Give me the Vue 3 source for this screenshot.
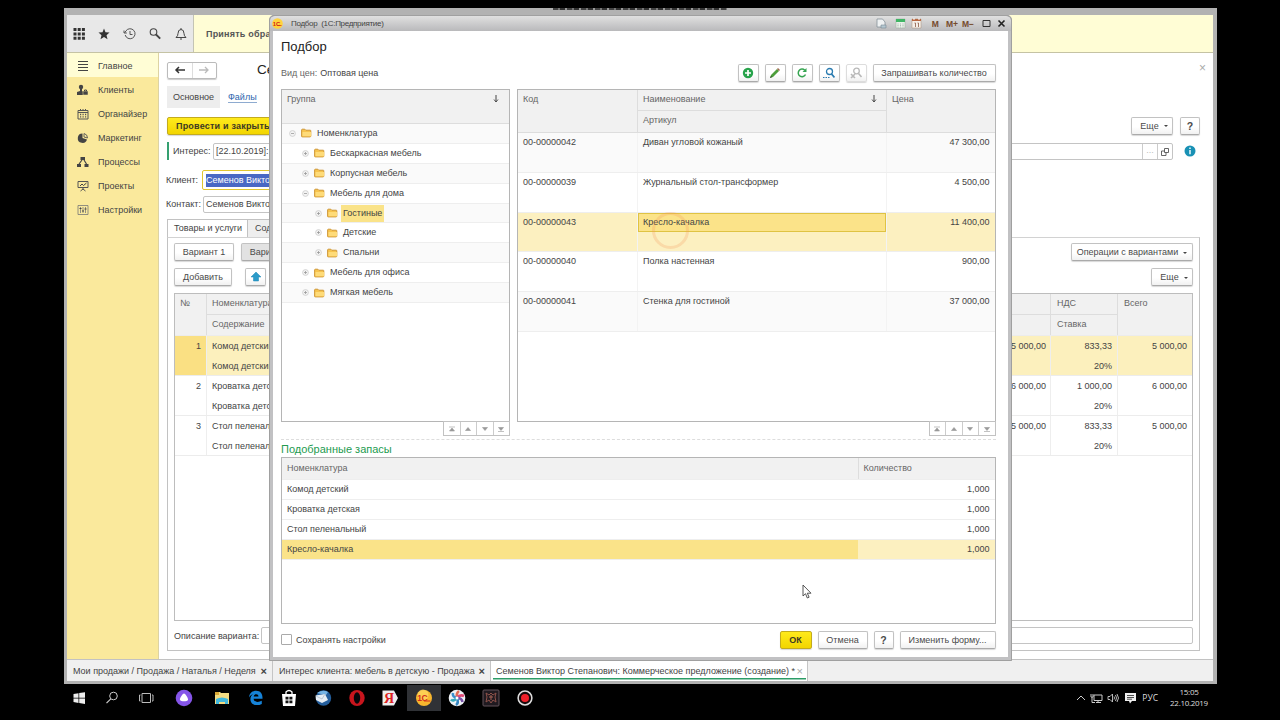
<script setup>
import { ref } from "vue";

const menu = ref([
  { name: "Главное", icon: "lines" },
  { name: "Клиенты", icon: "clients" },
  { name: "Органайзер", icon: "calendar" },
  { name: "Маркетинг", icon: "pie" },
  { name: "Процессы", icon: "process" },
  { name: "Проекты", icon: "board" },
  { name: "Настройки", icon: "settings" }
]);
const activeMenu = ref("Главное");

const offerRows = ref([
  { n: 1, name: "Комод детский", sum: "5 000,00", vat: "833,33", total: "5 000,00" },
  { n: 2, name: "Кроватка детская", sum: "6 000,00", vat: "1 000,00", total: "6 000,00" },
  { n: 3, name: "Стол пеленальный", sum: "5 000,00", vat: "833,33", total: "5 000,00" }
]);

const groups = ref([
  { name: "Номенклатура", level: 0, open: true },
  { name: "Бескаркасная мебель", level: 1 },
  { name: "Корпусная мебель", level: 1 },
  { name: "Мебель для дома", level: 1, open: true },
  { name: "Гостиные", level: 2 },
  { name: "Детские", level: 2 },
  { name: "Спальни", level: 2 },
  { name: "Мебель для офиса", level: 1 },
  { name: "Мягкая мебель", level: 1 }
]);
const activeGroup = ref("Гостиные");

const goods = ref([
  { code: "00-00000042", name: "Диван угловой кожаный", price: "47 300,00" },
  { code: "00-00000039", name: "Журнальный стол-трансформер", price: "4 500,00" },
  { code: "00-00000043", name: "Кресло-качалка", price: "11 400,00" },
  { code: "00-00000040", name: "Полка настенная", price: "900,00" },
  { code: "00-00000041", name: "Стенка для гостиной", price: "37 000,00" }
]);
const activeGood = ref("00-00000043");

const picked = ref(["Комод детский", "Кроватка детская", "Стол пеленальный", "Кресло-качалка"]);
const activePicked = ref("Кресло-качалка");

const pager = ["M1 2h6M4 3L6.500 6h-5z", "M4 2.500L6.500 5.500h-5z", "M4 5.500L6.500 2.500h-5z", "M1 6.500h6M4 5.500L6.500 2.500h-5z"];

/* MENU ICONS, 12x12 */
const menuIcons = {
  lines: '<path d="M1 1.500h10M1 4.500h10M1 7.500h10M1 10.500h10" stroke="#444" stroke-width="1.200"/>',
  clients: '<circle cx="4" cy="3" r="2.200" fill="#444"/><path d="M3 5h2v2l2 1v3H0V8l3-1z" fill="#444"/><path d="M6 7h5v4H6z" fill="#444" stroke="#fae89a" stroke-width=".5"/><path d="M7.500 7V6h2v1" fill="none" stroke="#444"/>',
  calendar: '<path d="M1 2.500h10v8.500H1zM1 4.500h10M3.500 1v2M6 1v2M8.500 1v2" fill="none" stroke="#555"/><path d="M3 6.500h1.200M5.500 6.500h1.200M8 6.500h1.200M3 8.800h1.200M5.500 8.800h1.200M8 8.800h1.200" stroke="#555" stroke-width="1.300"/>',
  pie: '<path d="M5.500 1.500A4.700 4.700 0 1 0 10 7.500L5.500 6z" fill="#444"/><path d="M7 1.500A4.500 4.500 0 0 1 10.500 6L7 5z" fill="none" stroke="#555" stroke-width=".9"/>',
  process: '<path d="M3.500 1h4.500v3H3.500zM0 8h4v3H0zM7.500 8h4v3h-4z" fill="#444"/><path d="M5 4L2 8M7 4l2.500 4" stroke="#444" stroke-width="1.200"/>',
  board: '<path d="M1 1.500h10v6H1zM6 7.500v2M3.500 11L6 9l2.500 2" fill="none" stroke="#555"/><path d="M3 6l2-2 1.500 1.500L9.500 3" fill="none" stroke="#444"/>',
  settings: '<path d="M1 1.500h10v9H1z" fill="none" stroke="#777" stroke-width=".8"/><path d="M3.500 3v6M6 3v6M8.500 3v6" stroke="#777" stroke-width=".8"/><path d="M2.500 4.500h2M5 7h2M7.500 5h2" stroke="#444" stroke-width="1.200"/>'
};

/* TASKBAR ICONS, 18x18 */
const apps = [
  { id: "win", svg: '<path d="M3.500 5l5-.8v4.500h-5zM9.200 4.100L15 3.300v5.400H9.200zM3.500 9.400h5v4.500l-5-.8zM9.200 9.400H15v5.500l-5.800-.9z" fill="#eee"/>' },
  { id: "search", svg: '<circle cx="10.500" cy="7" r="3.800" fill="none" stroke="#ccc"/><path d="M7.800 9.800L3.500 14.200" stroke="#ccc" stroke-width="1.200"/>' },
  { id: "tasks", svg: '<path d="M5 4.500h8.500v9H5zM3.500 6h-1v6h1M15 6h1v6h-1" fill="none" stroke="#bbb"/>' },
  { id: "alice", svg: '<circle cx="9" cy="9" r="8.300" fill="#8555e8"/><path d="M9 4.500c1.500 0 4.500 5 4 6.500-.6 1.800-7.400 1.800-8 0C4.500 9.500 7.500 4.500 9 4.500z" fill="#fff"/>' },
  { id: "explorer", svg: '<path d="M2 3h5l1 1h8v11H2z" fill="#f3dc83"/><path d="M2 3h4v3H2z" fill="#d9a936"/><path d="M3 10q6-3 12 0v5h-3v-2H6v2H3z" fill="#42b8dd"/>' },
  { id: "edge", svg: '<path d="M2 8.500C2.500 3.500 6 1.800 9.200 1.800c4.300 0 6.500 3 6.300 7.900H6.600c.3 3.600 4.700 4 8.200 2.100v3.100C9.600 17.500 3.300 15.700 3.400 10c0-2.200 1.200-4.100 3.100-5C4.600 5.300 3 6.700 2 8.500zM6.700 7.400h4.800C11.500 4.400 7 4.500 6.700 7.400z" fill="#1683d8"/>' },
  { id: "store", svg: '<path d="M2 5h14l-1 12H3z" fill="#fff"/><path d="M6 5V3q3-3 6 0v2" fill="none" stroke="#fff" stroke-width="1.300"/><path d="M5.500 7.800h3v2.800h-3zM9.400 7.800h3v2.800h-3zM5.500 11.400h3v2.800h-3zM9.400 11.400h3v2.800h-3z" fill="#111"/>' },
  { id: "mail", svg: '<circle cx="9.500" cy="9" r="7.700" fill="#245e9c"/><path d="M3 4q6-4 11-1l-2 3z" fill="#75b3e3"/><path d="M1.500 6.500L11 5l3 6-6 3-6-3z" fill="#e7eef4"/><path d="M2 7l6 3 3-5" fill="none" stroke="#a9b8c5" stroke-width=".7"/>' },
  { id: "opera", svg: '<ellipse cx="9" cy="9" rx="7.700" ry="8" fill="#c8151d"/><ellipse cx="9" cy="9" rx="3.200" ry="5.700" fill="#06070b"/>' },
  { id: "yandex", svg: '<path d="M1.500 1.500H13L17 9l-4 7.500H1.500z" fill="#eee"/><text x="3" y="14" fill="#d22" font-family="Liberation Serif" font-weight="bold" font-size="14">Я</text>' },
  { id: "onec", svg: '<circle cx="9" cy="9" r="8" fill="#f8b72e"/><circle cx="8" cy="6" r="5.500" fill="#fed45c" opacity=".8"/><text x="2.200" y="12" fill="#d3301c" font-family="Liberation Sans" font-weight="bold" font-size="8.500" letter-spacing="-.5">1С</text><path d="M9 12h6.500" stroke="#d3301c"/>' },
  { id: "wheel", svg: '<circle cx="9" cy="9" r="8.300" fill="#eef2f5"/><g fill="none" stroke-width="2.600"><path d="M9 9Q8 4 11 2" stroke="#e26b54"/><path d="M9 9Q12 5 16 7" stroke="#e34b78"/><path d="M9 9Q14 9 14.500 13" stroke="#7953a8"/><path d="M9 9Q11 14 8 16" stroke="#3485c1"/><path d="M9 9Q5 13 3 10.500" stroke="#37a9bb"/><path d="M9 9Q4 8 5 4" stroke="#398fca"/></g><circle cx="9" cy="9" r="1.500" fill="#fff"/>' },
  { id: "game", svg: '<rect x="1" y="1" width="16" height="16" rx="1" fill="#201a20" stroke="#62535a"/><path d="M4 4l3 2 2-2 2 2 3-2-1 4 1 5-3-2-2 3-2-3-3 2 1-5z" fill="none" stroke="#8e5149"/><path d="M7 8h4M9 6v5" stroke="#a46356"/>' },
  { id: "record", svg: '<circle cx="9" cy="9" r="6.900" fill="#16090b" stroke="#ddd" stroke-width="1.500"/><circle cx="9" cy="9" r="4" fill="#f0202a"/>' }
];
</script>

<template>
  <div class="screen">
    <div class="window">
      <div class="behind"></div>
      <header class="top">
        <div class="tools">
          <svg width="14" height="14" viewBox="0 0 14 14"><path d="M3 1v12M7.200 1v12M11.400 1v12" stroke="#333" stroke-width="3" stroke-dasharray="3 1.400" /></svg>
          <svg width="14" height="14" viewBox="0 0 14 14"><path d="M7 1.500l1.500 3.800 4 .3-3 2.700 1 4L7 10.100l-3.500 2.200 1-4-3-2.700 4-.3z" fill="#333" /></svg>
          <svg width="14" height="14" viewBox="0 0 14 14"><path d="M2.200 8A5 5 0 1 0 3 3.800L1.500 6M1 3.500V6h2.800M7 4v3.500h2.500" fill="none" stroke="#555" /></svg>
          <svg width="14" height="14" viewBox="0 0 14 14"><circle cx="5.500" cy="5" r="3.300" fill="none" stroke="#444" stroke-width="1.100" /><path d="M8 7.500l4.200 4.200" stroke="#444" stroke-width="1.900" /></svg>
          <svg width="14" height="14" viewBox="0 0 14 14"><path d="M2 10.500q2-1.500 2-4Q4 2.500 7 2.500t3 4q0 2.500 2 4zM6 12h2M7 1v1.500" fill="none" stroke="#444" /></svg>
        </div>
        <div class="notice">Принять обращение</div>
      </header>

      <div class="body">
        <nav class="menu">
          <div v-for="item in menu" :key="item.name" class="menu-item" :class="{ active: item.name === activeMenu }" @click="activeMenu = item.name">
            <svg width="12" height="12" viewBox="0 0 12 12" v-html="menuIcons[item.icon]"></svg>
            <span>{{ item.name }}</span>
          </div>
        </nav>

        <main class="form">
          <div class="line title-line">
            <div class="arrows">
              <span><svg width="12" height="8" viewBox="0 0 12 8"><path d="M11 4H2M5 1L2 4l3 3" fill="none" stroke="#333" stroke-width="1.500" /></svg></span>
              <span><svg width="12" height="8" viewBox="0 0 12 8"><path d="M1 4h9M7 1l3 3-3 3" fill="none" stroke="#bbb" stroke-width="1.300" /></svg></span>
            </div>
            <h1>Семенов Виктор</h1>
            <span class="form-close">×</span>
          </div>
          <div class="line links"><span class="current">Основное</span><a>Файлы</a></div>
          <div class="line commands">
            <button class="btn yellow">Провести и закрыть</button>
            <span class="grow"></span>
            <button class="btn more">Еще<i></i></button>
            <button class="btn help">?</button>
          </div>
          <div class="line interest">
            <label>Интерес:</label>
            <div class="input"><span>[22.10.2019]:</span><em>...</em><em class="open"><svg width="8" height="8" viewBox="0 0 8 8"><path d="M3.500 .5h4v4h-4zM3.500 3h-3v4.500H5v-3" fill="none" stroke="#555" stroke-width=".9" /></svg></em></div>
            <svg class="info" width="12" height="12" viewBox="0 0 12 12"><circle cx="6" cy="6" r="5.500" fill="#1991b5" /><path d="M6 2.500v1.500M6 5v4.300" stroke="#fff" stroke-width="1.400" /></svg>
          </div>
          <div class="line client"><label>Клиент:</label><div class="input focus"><mark>Семенов Виктор Степанович</mark></div></div>
          <div class="line contact"><label>Контакт:</label><div class="input">Семенов Виктор</div></div>
          <div class="page-tabs"><span class="on">Товары и услуги</span><span>Содержание</span></div>
          <section class="page">
            <div class="line variants">
              <button class="btn">Вариант 1</button>
              <button class="btn pressed">Вариант 2</button>
              <span class="grow"></span>
              <button class="btn ops">Операции с вариантами<i></i></button>
            </div>
            <div class="line adding">
              <button class="btn">Добавить</button>
              <button class="btn up"><svg width="12" height="12" viewBox="0 0 12 12"><path d="M6 1l5 5H8.500v4h-5V6H1z" fill="#2c9bc9" stroke="#1984b5" stroke-width=".5" /></svg></button>
              <span class="grow"></span>
              <button class="btn more">Еще<i></i></button>
            </div>
            <div class="offer">
              <div class="offer-row head">
                <div class="num">№</div>
                <div class="name"><p>Номенклатура</p><p>Содержание</p></div>
                <div class="vat"><p>НДС</p><p>Ставка</p></div>
                <div class="total"><p>Всего</p></div>
              </div>
              <div v-for="row in offerRows" :key="row.n" class="offer-row" :class="{ selected: row.n === 1 }">
                <div class="num">{{ row.n }}</div>
                <div class="name"><p>{{ row.name }}<span>{{ row.sum }}</span></p><p>{{ row.name }}</p></div>
                <div class="vat"><p>{{ row.vat }}</p><p>20%</p></div>
                <div class="total"><p>{{ row.total }}</p></div>
              </div>
            </div>
            <div class="line description"><label>Описание варианта:</label><div class="input"></div></div>
          </section>
        </main>
      </div>

      <footer class="windows">
        <div class="win-tab first">Мои продажи / Продажа / Наталья / Неделя<b>×</b></div>
        <div class="win-tab second">Интерес клиента: мебель в детскую - Продажа<b>×</b></div>
        <div class="win-tab active">Семенов Виктор Степанович: Коммерческое предложение (создание) *<b>×</b></div>
      </footer>
    </div>

    <!-- TASKBAR -->
    <div class="taskbar">
      <div v-for="app in apps" :key="app.id" class="app" :class="app.id"><svg width="18" height="18" viewBox="0 0 18 18" v-html="app.svg"></svg></div>
      <span class="grow"></span>
      <div class="tray">
        <svg width="10" height="10" viewBox="0 0 10 10"><path d="M1 7l4-4 4 4" fill="none" stroke="#ccc" /></svg>
        <svg width="13" height="12" viewBox="0 0 13 12"><path d="M4 3h8v5.500H4zM6 10.500h5M8 8.500v2M1 2v3q1 1 2 0V2M2 6v4.500h3" fill="none" stroke="#ccc" /></svg>
        <svg width="12" height="12" viewBox="0 0 12 12"><path d="M1 4.500h2L5.500 2v8L3 7.500H1zM7 4.500q1 1.500 0 3M8.500 3q2 3 0 6M10 2q3 4 0 8" fill="none" stroke="#ccc" stroke-width=".9" /></svg>
        <svg class="msg" width="13" height="12" viewBox="0 0 13 12"><path d="M1 1h11v8H8l-2 2.500L5 9H1z" fill="#eee" /><path d="M3 3.500h7M3 5.500h7M3 7.200h5" stroke="#222" stroke-width=".8" /></svg>
        <span class="lang">РУС</span>
        <span class="clock">15:05<br />22.10.2019</span>
      </div>
    </div>

    <!-- PICK DIALOG -->
    <div class="dialog">
      <div class="dialog-bar">
        <svg width="11" height="11" viewBox="0 0 11 11"><circle cx="5.500" cy="5.500" r="5.300" fill="#ffd33d" /><text x=".8" y="7.500" font-size="5.800" font-weight="bold" font-family="Liberation Sans" fill="#d02317">1С</text><path d="M5.500 7.500h4" stroke="#d02317" stroke-width=".7" /></svg>
        <span class="bar-title">Подбор&nbsp; (1С:Предприятие)</span>
        <span class="grow"></span>
        <div class="bar-tools">
          <svg class="doc" width="11" height="11" viewBox="0 0 11 11"><path d="M1 1h5.500L9 4v5H1z" fill="#eef1f2" stroke="#87929a" stroke-width=".8" /><path d="M5 7h5v3H5z" fill="#b4c7d0" stroke="#7b8b93" stroke-width=".6" /></svg>
          <svg class="calc" width="11" height="11" viewBox="0 0 11 11"><path d="M1 1h9v9H1z" fill="#e9f1e9" stroke="#9a9" stroke-width=".5" /><path d="M1 1h9v3H1z" fill="#40b565" /><path d="M3 5.500v4M5.500 5.500v4M8 5.500v4" stroke="#a9b6b1" stroke-dasharray="1 .6" /></svg>
          <svg class="cal" width="11" height="11" viewBox="0 0 11 11"><path d="M1 1h9v9H1z" fill="#f5f0e9" stroke="#aa8f76" stroke-width=".5" /><path d="M1 1h9v2H1z" fill="#b76843" /><path d="M3 0v2M8 0v2" stroke="#fff" /><path d="M3.500 5h1v4M6.500 5h1v4" fill="none" stroke="#8c5944" stroke-width=".8" /></svg>
          <b class="m1">M</b><b class="m2">M+</b><b class="m3">M−</b>
          <svg class="max" width="9" height="9" viewBox="0 0 9 9"><path d="M1 1.500h7v6H1z" fill="none" stroke="#333" /></svg>
          <svg width="9" height="9" viewBox="0 0 9 9"><path d="M1.500 1.500l6 6M7.500 1.500l-6 6" stroke="#222" stroke-width="1.600" /></svg>
        </div>
      </div>

      <div class="dialog-body">
        <h2>Подбор</h2>
        <div class="pick-line">
          <label>Вид цен:</label><span>Оптовая цена</span>
          <span class="grow"></span>
          <button class="btn sq"><svg width="12" height="12" viewBox="0 0 12 12"><circle cx="6" cy="6" r="5.200" fill="#27a34b" /><path d="M6 3v6M3 6h6" stroke="#fff" stroke-width="1.700" /></svg></button>
          <button class="btn sq"><svg width="12" height="12" viewBox="0 0 12 12"><path d="M1 11l1-3 6-6 2 2-6 6z" fill="#4d9e3b" /><path d="M8 2l1-1 2 2-1 1z" fill="#a0684f" /><path d="M1 11l1-2 1 1z" fill="#333" /></svg></button>
          <button class="btn sq"><svg width="12" height="12" viewBox="0 0 12 12"><path d="M9.500 7.500A3.800 3.800 0 1 1 8.800 3.300" fill="none" stroke="#35a450" stroke-width="1.500" /><path d="M10.500 1v4h-4z" fill="#35a450" /></svg></button>
          <button class="btn sq"><svg width="12" height="12" viewBox="0 0 12 12"><circle cx="6.500" cy="4.500" r="3" fill="none" stroke="#2a7bb0" stroke-width="1.300" /><path d="M8.500 7l3 3.500" stroke="#2a7bb0" stroke-width="1.800" /><path d="M0 10.500h7" stroke="#2a7bb0" stroke-dasharray="1.500 1" /></svg></button>
          <button class="btn sq off"><svg width="12" height="12" viewBox="0 0 12 12"><circle cx="6.500" cy="4" r="2.800" fill="none" stroke="#b9b9b9" stroke-width="1.300" /><path d="M8.500 6.500l3 3.500M1 7l4 4M5 7l-4 4" stroke="#b9b9b9" stroke-width="1.600" /></svg></button>
          <button class="btn ask">Запрашивать количество</button>
        </div>

        <div class="panes">
          <div class="pane left">
            <div class="grid tree">
              <div class="tree-head">Группа<span class="sort"><svg width="6" height="8" viewBox="0 0 6 8"><path d="M3 0v7" stroke="#444" /><path d="M1 4.500L3 7l2-2.500" fill="none" stroke="#444" stroke-width=".9" /></svg></span></div>
              <div v-for="g in groups" :key="g.name" class="tree-row" :class="'l' + g.level" @click="activeGroup = g.name">
                <svg class="knob" width="7" height="7" viewBox="0 0 7 7"><circle cx="3.500" cy="3.500" r="2.900" fill="#f4f4f4" stroke="#ccc" stroke-width=".8" /><path :d="g.open ? 'M2 3.500h3' : 'M2 3.500h3M3.500 2v3'" stroke="#999" stroke-width=".8" /></svg>
                <svg class="folder" width="11" height="10" viewBox="0 0 11 10"><path d="M.6 8.500V2q0-.8.8-.8h2.400l1 1h4.400q.6 0 .6.6V8q0 .9-.8.9H1.400q-.8 0-.8-.4z" fill="#f7c44e" stroke="#c98f2c" stroke-width=".9" /><path d="M1.500 4h8.700v4.300H1.500z" fill="#fedb79" /></svg>
                <span :class="{ chosen: g.name === activeGroup }">{{ g.name }}</span>
              </div>
            </div>
            <div class="pager"><span v-for="p in pager" :key="p"><svg width="8" height="8" viewBox="0 0 8 8"><path :d="p" fill="#999" stroke="#999" stroke-width=".6" /></svg></span></div>
          </div>
          <div class="pane right">
            <div class="grid goods">
              <div class="goods-row head">
                <div class="code">Код</div>
                <div class="name"><p>Наименование<span class="sort"><svg width="6" height="8" viewBox="0 0 6 8"><path d="M3 0v7" stroke="#444" /><path d="M1 4.500L3 7l2-2.500" fill="none" stroke="#444" stroke-width=".9" /></svg></span></p><p>Артикул</p></div>
                <div class="price">Цена</div>
              </div>
              <div v-for="item in goods" :key="item.code" class="goods-row" :class="{ selected: item.code === activeGood }" @click="activeGood = item.code">
                <div class="code">{{ item.code }}</div>
                <div class="name"><p>{{ item.name }}</p></div>
                <div class="price">{{ item.price }}</div>
              </div>
            </div>
            <div class="pager"><span v-for="p in pager" :key="p"><svg width="8" height="8" viewBox="0 0 8 8"><path :d="p" fill="#999" stroke="#999" stroke-width=".6" /></svg></span></div>
          </div>
        </div>

        <h3>Подобранные запасы</h3>
        <div class="grid picked">
          <div class="picked-row head"><span>Номенклатура</span><span class="qty">Количество</span></div>
          <div v-for="name in picked" :key="name" class="picked-row" :class="{ selected: name === activePicked }" @click="activePicked = name">
            <span>{{ name }}</span><span class="qty">1,000</span>
          </div>
        </div>

        <div class="dialog-foot">
          <i class="check"></i><label>Сохранять настройки</label>
          <span class="grow"></span>
          <button class="btn yellow ok">ОК</button>
          <button class="btn cancel">Отмена</button>
          <button class="btn help">?</button>
          <button class="btn change">Изменить форму...</button>
        </div>
      </div>
    </div>

    <div class="click-mark"></div>
    <svg class="cursor" width="10" height="15" viewBox="0 0 10 15"><path d="M1 1v11l2.500-2.300L5.300 14l1.800-.8-1.800-4H9z" fill="#fff" stroke="#444" stroke-width=".9" /></svg>
  </div>
</template>

<style>
body {
  margin: 0;
  background: #000;
  overflow: hidden;
}
</style>

<style scoped>
* {
  box-sizing: border-box;
}

.screen {
  position: relative;
  width: 1280px;
  height: 720px;
  padding: 8px 63px 0 64px;
  background: #000;
  color: #444;
  font: 9px/12px "Liberation Sans", Arial, sans-serif;
  overflow: hidden;
  white-space: nowrap;
}

h1, h2, h3, p {
  margin: 0;
  font-weight: normal;
}

svg {
  flex: none;
  display: block;
}

.grow {
  flex: 1;
}

.line {
  display: flex;
  align-items: center;
}

/* MAIN WINDOW */
.window {
  height: 676px;
  border: solid #b2b2b2;
  border-width: 0 4px 3px 3px;
  background: #fff;
  display: flex;
  flex-direction: column;
}

.behind {
  height: 7px;
  background: #b2b2b2;
}

.behind::before {
  content: "";
  display: block;
  width: 174px;
  height: 2px;
  margin-left: 486px;
  background: repeating-linear-gradient(90deg, #444 0 5px, #777 5px 7px, #333 7px 12px, #999 12px 14px);
}

.top {
  height: 38px;
  display: flex;
  border-bottom: 1px solid #c5c3a4;
}

.tools {
  width: 127px;
  padding-left: 5px;
  display: flex;
  align-items: center;
  gap: 11.400px;
  background: #e8e8e8;
  border-right: 1px solid #c4c4b4;
}

.notice {
  flex: 1;
  padding: 13px 0 0 12px;
  background: #fffdd5;
  font-weight: bold;
  color: #555;
  letter-spacing: .2px;
}

.body {
  height: 606px;
  display: flex;
}

.menu {
  width: 92px;
  background: #fae99c;
  border-right: 1px solid #ddd3a3;
}

.menu-item {
  height: 24px;
  padding: 1px 0 0 10px;
  display: flex;
  align-items: center;
  gap: 9px;
}

.menu-item.active {
  background: #fffdd5;
}

.form {
  flex: 1;
  padding: 8px 13px 0 8px;
}

.title-line {
  height: 18px;
}

.arrows {
  width: 50px;
  height: 17px;
  display: flex;
  border: 1px solid #bbb;
  border-radius: 2px;
  box-shadow: 0 1px 1px #ccc;
}

.arrows span {
  flex: 1;
  display: flex;
  align-items: center;
  justify-content: center;
}

.arrows span + span {
  border-left: 1px solid #ddd;
}

h1 {
  width: 900px;
  margin-left: 40px;
  font-size: 13.500px;
  color: #222;
}

.form-close {
  margin: -5px -6px 0 auto;
  font-size: 12px;
  color: #aaa;
}

.links {
  height: 22px;
  margin-top: 7px;
}

.current {
  width: 53px;
  line-height: 22px;
  background: #ededed;
  text-align: center;
}

.links a {
  margin-left: 8px;
  color: #2d65ad;
  border-bottom: 1px solid #8eabd0;
  line-height: 10px;
}

.commands {
  margin-top: 8px;
  height: 19px;
}

.btn {
  height: 18px;
  padding: 0 9px;
  display: flex;
  align-items: center;
  justify-content: center;
  background: linear-gradient(#fff 55%, #f1f1f1);
  border: 1px solid #c2c2c2;
  border-bottom-color: #aaa;
  border-radius: 2px;
  box-shadow: 0 1px 1px #d8d8d8;
  color: #4a4a4a;
  font: inherit;
  white-space: nowrap;
}

.btn.yellow {
  background: linear-gradient(#ffea1c, #f2d500);
  border-color: #c3ab1e;
  color: #3c3924;
  font-weight: bold;
}

.btn i {
  margin: 1px 0 0 5px;
  border: 2px solid transparent;
  border-top-color: #444;
  border-bottom: 0;
}

.btn.more {
  width: 42px;
  padding: 0 0 0 4px;
}

.btn.help {
  width: 20px;
  margin-left: 7px;
  padding: 0;
  font-size: 10.500px;
  font-weight: bold;
}

.commands .yellow {
  padding: 0 8px;
  letter-spacing: .2px;
}

.input {
  height: 17px;
  padding-left: 3px;
  border: 1px solid #c4c4c4;
  border-radius: 2px;
  display: flex;
  align-items: center;
  flex: 1;
}

.interest {
  margin-top: 7px;
  height: 18px;
  padding-left: 4px;
  border-left: 2px solid #35a070;
}

.interest .input {
  padding-left: 2px;
  flex: none;
  width: 960px;
  margin-left: 4px;
}

.interest label {
  width: 36px;
}

.input em {
  width: 15px;
  height: 15px;
  border-left: 1px solid #ccc;
  color: #bbb;
  font-style: normal;
  text-align: center;
}

.input em:first-of-type {
  margin-left: auto;
}

.input em.open {
  padding: 4px 3px;
}

.info {
  margin-left: 11px;
}

.client {
  margin-top: 10px;
  height: 20px;
}

.client label {
  width: 36px;
  margin-left: -1px;
}

.input.focus {
  padding-left: 3px;
  flex: none;
  width: 300px;
  height: 20px;
  border: 1.500px solid #e1c630;
}

mark {
  background: #4968c4;
  color: #fff;
  line-height: 13px;
}

.contact {
  margin-top: 5px;
  height: 18px;
}

.contact label {
  width: 37px;
  margin-left: -1px;
}

.contact .input {
  padding-left: 2px;
  flex: none;
  width: 300px;
}

.page-tabs {
  display: flex;
  margin-top: 6px;
  height: 18px;
}

.page-tabs span {
  width: 81px;
  padding-left: 7px;
  line-height: 17px;
  background: #eee;
  border: 1px solid #c2c2c2;
  border-width: 1px 1px 0 0;
}

.page-tabs .on {
  background: #fff;
  border-left-width: 1px;
  padding-left: 6px;
}

.page {
  height: 414px;
  padding: 5px 6px 0 6px;
  border: 1px solid #c2c2c2;
  border-top-color: #d2d2d2;
}

.variants {
  height: 18px;
  gap: 7px;
}

.variants .btn {
  width: 60px;
  padding: 0;
}

.variants .pressed {
  background: #e2e2e2;
}

.variants .btn.ops {
  width: 122px;
}

.adding {
  margin-top: 7px;
  height: 18px;
  gap: 13px;
}

.adding .btn:first-child {
  width: 58px;
  padding: 0;
}

.adding .up {
  width: 21px;
  padding: 0;
}

.offer {
  height: 328px;
  margin-top: 7px;
  border: 1px solid #bdbdbd;
}

.offer-row {
  height: 40px;
  display: flex;
  border-bottom: 1px solid #ececec;
}

.offer-row > div {
  border-right: 1px solid #eee;
}

.offer-row p {
  height: 20px;
  line-height: 20px;
}

.offer-row .num {
  width: 32px;
  padding: 0 5px;
  line-height: 20px;
  text-align: right;
}

.offer-row .name {
  flex: 1;
  padding-left: 5px;
}

.offer-row .name span {
  float: right;
  margin-right: 4px;
}

.offer-row .vat {
  width: 67px;
  text-align: right;
}

.offer-row .vat p {
  padding-right: 5px;
}

.offer-row .total {
  width: 74px;
  padding-right: 5px;
  text-align: right;
  border: 0;
}

.offer-row.head {
  height: 42px;
  background: #f1f1f1;
  color: #666;
}

.offer-row.head > div {
  text-align: left;
  border-color: #ddd;
}

.offer-row.head p {
  height: 21px;
  padding-left: 6px;
  line-height: 19px;
}

.offer-row.head .num {
  line-height: 19px;
}

.offer-row.head .name p {
  padding-left: 5px;
}

.offer-row.head .name {
  padding: 0;
}

.offer-row.head .name p:first-child,
.offer-row.head .vat p:first-child {
  border-bottom: 1px solid #ddd;
}

.offer-row.selected {
  background: #fcf0bd;
}

.offer-row.selected .num {
  background: #fae083;
}

.description {
  margin-top: 6px;
}

.description .input {
  margin-left: 2px;
}

.windows {
  height: 22px;
  display: flex;
  background: #f0f0f0;
  border-top: 1px solid #c2c2c2;
}

.win-tab {
  display: flex;
  align-items: center;
  padding: 0 5px 0 6px;
  border-right: 1px solid #c5c5c5;
}

.win-tab b {
  margin-left: auto;
  font-size: 11px;
}

.win-tab.first {
  width: 206px;
}

.win-tab.second {
  width: 218px;
}

.win-tab.active {
  width: 317px;
  padding: 0 4px 0 5px;
  background: linear-gradient(#2c9c66, #2c9c66) 50% 18px / 313px 1.500px no-repeat #fff;
}

.win-tab.active b {
  color: #aaa;
  font-weight: normal;
}

/* TASKBAR */
.taskbar {
  height: 28px;
  display: flex;
  align-items: center;
}

.app {
  width: 33.600px;
  height: 26px;
  display: flex;
  align-items: center;
  justify-content: center;
}

.app.win {
  margin-left: -2px;
}

.app.alice {
  margin-left: 4px;
}

.app.explorer {
  margin-left: 5px;
}

.app.onec {
  background: #303236;
}

.tray {
  display: flex;
  align-items: center;
  color: #ddd;
  gap: 4px;
  font-family: "Open Sans", "Noto Sans", sans-serif;
}

.tray .msg {
  margin-left: 1px;
}

.lang {
  margin-left: 1px;
  font-size: 8.500px;
}

.clock {
  width: 44px;
  margin: -2px 6px 0 5px;
  text-align: center;
  font-size: 8px;
  line-height: 11.500px;
  letter-spacing: -.3px;
}

/* DIALOG */
.dialog {
  position: absolute;
  left: 269px;
  top: 15px;
  width: 743px;
  height: 646px;
  border: 4px solid #c1c1c3;
  border-top: 0;
  border-radius: 5px 5px 0 0;
  outline: 1px solid #a0a0a0;
  outline-offset: -1px;
  background: #fff;
}

.dialog-bar {
  height: 16px;
  margin: 0 -3px;
  padding-right: 5px;
  display: flex;
  align-items: center;
  background: linear-gradient(#e0e0e0, #b9b9bb);
  border-top: 1px solid #999;
  border-radius: 5px 5px 0 0;
}

.dialog-bar > svg {
  margin-left: 2px;
}

.bar-title {
  margin-left: 8px;
  font-size: 8px;
  letter-spacing: -.3px;
}

.bar-tools {
  display: flex;
  align-items: center;
  color: #754b2d;
  font-size: 8.500px;
}

.bar-tools .calc {
  margin-left: 8px;
}

.bar-tools .cal {
  margin-left: 5px;
}

.bar-tools .m1 {
  margin-left: 10px;
}

.bar-tools .m2 {
  margin-left: 7px;
}

.bar-tools .m3 {
  margin-left: 4px;
}

.bar-tools .max {
  margin: 0 6px 0 8px;
}

.dialog-body {
  padding: 7px 12.500px 0 8px;
}

h2 {
  font-size: 13px;
  line-height: 17px;
  color: #222;
}

.pick-line {
  height: 20px;
  margin-top: 8px;
  display: flex;
  align-items: center;
}

.pick-line label {
  margin-right: 3px;
  color: #666;
}

.btn.sq {
  width: 21px;
  padding: 0;
  margin-right: 6px;
}

.btn.off {
  border-color: #ddd;
}

.btn.ask {
  width: 123px;
  padding: 0;
}

.panes {
  height: 351px;
  margin-top: 6px;
  display: flex;
  gap: 7px;
  border-bottom: 1px dashed #ddd;
}

.pane.left {
  width: 229px;
}

.pane.right {
  flex: 1;
}

.grid {
  border: 1px solid #b5b5b5;
}

.tree,
.goods {
  height: 333px;
}

.tree-head {
  height: 34px;
  padding: 3px 10px 0 5px;
  display: flex;
  justify-content: space-between;
  background: #f1f1f1;
  border-bottom: 1px solid #ddd;
  color: #666;
}

.sort {
  padding-top: 2px;
}

.tree-row {
  height: 19.900px;
  display: flex;
  align-items: center;
  border-bottom: 1px solid #eee;
}

.tree-row:nth-child(even) {
  background: #fafafa;
}

.tree-row.l0 {
  padding-left: 7px;
}

.tree-row.l1 {
  padding-left: 20px;
}

.tree-row.l2 {
  padding-left: 33px;
}

.folder {
  margin: 0 3px 0 5px;
}

.tree-row span {
  padding: 0 2px;
  line-height: 17px;
}

.tree-row .chosen {
  background: #fae389;
}

.pager {
  width: 67px;
  height: 15px;
  margin: -1px 0 0 auto;
  display: flex;
  border: 1px solid #c2c2c2;
}

.pager span {
  flex: 1;
  display: flex;
  align-items: center;
  justify-content: center;
}

.pager span + span {
  border-left: 1px solid #ccc;
}

.goods-row {
  height: 39.800px;
  display: flex;
  border-bottom: 1px solid #eee;
}

.goods-row > div {
  line-height: 19px;
}

.goods-row:nth-child(even) {
  background: #fafafa;
}

.goods-row .code {
  width: 120px;
  padding-left: 5px;
  border-right: 1px solid #f3f3f3;
}

.goods-row .name {
  width: 249px;
  border-right: 1px solid #f3f3f3;
}

.goods-row p {
  height: 20px;
  padding-left: 5px;
  line-height: 19px;
}

.goods-row .price {
  flex: 1;
  padding-right: 5px;
  text-align: right;
}

.goods-row.head {
  height: 43px;
  background: #f1f1f1;
  border-color: #ddd;
  color: #666;
}

.goods-row.head > div {
  border-color: #ddd;
}

.goods-row.head p {
  height: 21px;
}

.goods-row.head p:first-child {
  display: flex;
  justify-content: space-between;
  padding-right: 9px;
  border-bottom: 1px solid #ddd;
}

.goods-row.head .sort {
  padding-top: 5px;
}

.goods-row.head .price {
  padding-left: 5px;
  text-align: left;
}

.goods-row.selected {
  background: #fcf0c0;
}

.goods-row.selected p {
  height: 19px;
  padding-left: 4px;
  line-height: 17px;
  background: #fbe389;
  border: 1px solid #dfc343;
}

h3 {
  margin-top: 1px;
  font-size: 11px;
  line-height: 16px;
  color: #239b50;
}

.picked {
  height: 167px;
}

.picked-row {
  height: 19.900px;
  display: flex;
  line-height: 19px;
  border-bottom: 1px solid #eee;
}

.picked-row span {
  flex: 1;
  padding-left: 5px;
}

.picked-row .qty {
  flex: none;
  width: 137px;
  padding-right: 5px;
  text-align: right;
}

.picked-row.head {
  height: 22px;
  line-height: 21px;
  background: #f1f1f1;
  color: #666;
}

.picked-row.head .qty {
  text-align: left;
  border-left: 1px solid #ddd;
}

.picked-row.selected {
  background: #fcf0c0;
}

.picked-row.selected span:first-child {
  background: #fae389;
}

.dialog-foot {
  height: 19px;
  margin-top: 6px;
  display: flex;
  align-items: center;
}

.check {
  width: 11px;
  height: 11px;
  margin-right: 4px;
  border: 1px solid #aaa;
  border-radius: 1px;
}

.dialog-foot .ok {
  width: 32px;
  padding: 0;
}

.dialog-foot .cancel {
  width: 50px;
  margin-left: 6px;
  padding: 0;
}

.dialog-foot .help {
  margin-left: 6px;
}

.dialog-foot .change {
  width: 96px;
  margin-left: 6px;
  padding: 0;
}

.click-mark {
  position: absolute;
  left: 652px;
  top: 212px;
  width: 37px;
  height: 37px;
  border: 3px solid rgba(244, 150, 90, .25);
  border-radius: 50%;
}

.cursor {
  position: absolute;
  left: 802px;
  top: 584px;
}
</style>
